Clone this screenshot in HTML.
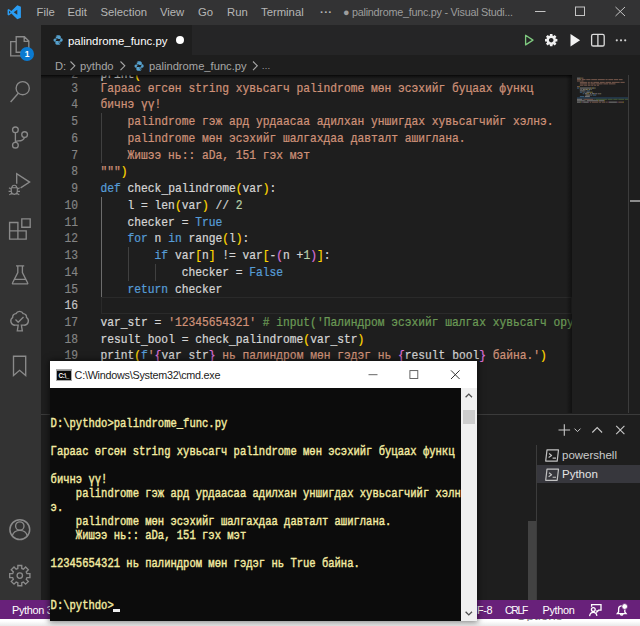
<!DOCTYPE html>
<html lang="mn">
<head>
<meta charset="utf-8">
<title>palindrome_func.py - Visual Studio Code</title>
<style>
*{box-sizing:border-box;margin:0;padding:0}
html,body{width:640px;height:626px;overflow:hidden;background:#fff}
body{position:relative;font-family:"Liberation Sans",sans-serif;font-size:11px;color:#ccc}
.abs{position:absolute}
#vsc{position:absolute;left:0;top:0;width:640px;height:618.5px;background:#1e1e1e;overflow:hidden}
#titlebar{position:absolute;left:0;top:0;width:640px;height:25px;background:#333334}
#titlebar .mi{position:absolute;top:0;height:25px;line-height:24px;font-size:11.3px;color:#b6b6b6;white-space:nowrap}
#title{position:absolute;top:0;left:343px;height:25px;line-height:24px;font-size:10.8px;letter-spacing:-.25px;color:#9d9d9d;white-space:nowrap}
#actbar{position:absolute;left:0;top:25px;width:41px;height:575px;background:#333333}
#actbar svg{position:absolute;overflow:visible}
#tabs{position:absolute;left:41px;top:25px;width:599px;height:30px;background:#252526}
#tab{position:absolute;left:0;top:0;width:151px;height:30px;background:#1e1e1e}
#tab .lbl{position:absolute;left:27px;top:0;height:30px;line-height:32.5px;font-size:11.4px;color:#fff;white-space:nowrap}
#crumbs{position:absolute;left:41px;top:55px;width:599px;height:20px;background:#1e1e1e;color:#a6a6a6;font-size:11.2px}
#crumbs span{position:absolute;top:0;height:20px;line-height:22.2px;white-space:nowrap}
#editor{position:absolute;left:41px;top:75px;width:599px;height:338px;background:#1e1e1e;overflow:hidden}
.ln{transform:scaleY(1.08);transform-origin:0 3.6px;-webkit-text-stroke:.15px currentColor;position:absolute;left:1.1px;width:36px;text-align:right;color:#858585;font-family:"Liberation Mono",monospace;font-size:11.28px;height:16.7px;line-height:16.7px;white-space:pre}
.cl{transform:scaleY(1.08);transform-origin:0 3.6px;-webkit-text-stroke:.22px currentColor;position:absolute;left:59.5px;color:#d4d4d4;font-family:"Liberation Mono",monospace;font-size:11.28px;height:16.7px;line-height:16.7px;white-space:pre}
.cl i{font-style:normal;position:relative;top:1.4px}
.s{color:#ce9178}.k{color:#569cd6}.n{color:#b5cea8}.c{color:#6a9955}.y{color:#ffd700}.p{color:#da70d6}
.guide{position:absolute;width:1px;background:#404040}
#panel{position:absolute;left:41px;top:413.7px;width:599px;height:187px;background:#1e1e1e;border-top:1px solid #3b3b3b}
#status{position:absolute;left:0;top:600px;width:640px;height:18.5px;background:#68217a;color:#fff;font-size:10.9px;letter-spacing:-.3px}
#status span{position:absolute;top:0;height:19px;line-height:21px;white-space:nowrap}
#cmd{position:absolute;left:50px;top:361.2px;width:427px;height:260.3px;background:#0c0c0c;box-shadow:0 0 6px 1px rgba(0,0,0,.55)}
#cmdtitle{position:absolute;left:0;top:0;width:427px;height:26.6px;background:#fff}
#cmdtitle .t{position:absolute;left:24.6px;top:0;height:26px;line-height:28.6px;font-size:10.8px;letter-spacing:-.25px;color:#1c1c1c;white-space:nowrap}
#cmdsb{position:absolute;left:411px;top:26.6px;width:15.5px;height:233.7px;background:#f0f0f0}
.tl{position:absolute;left:.6px;color:#f2eaa1;font-family:"Liberation Mono",monospace;font-size:10.52px;-webkit-text-stroke:.36px currentColor;transform:scaleY(1.19);transform-origin:0 8px;height:14px;line-height:14px;white-space:pre}
</style>
</head>
<body>
<div id="opt" class="abs" style="left:516px;top:608px;font-size:13.5px;color:#7c7c7c;line-height:16px;white-space:nowrap">Options</div>
<div class="abs" style="left:0;top:621px;width:640px;height:5px;background:linear-gradient(#fff,#e9e9e9)"></div>
<div id="vsc">
  <div id="titlebar">
    <svg class="abs" style="left:7px;top:5px" width="14.5" height="14.5" viewBox="0 0 100 100"><path fill="#2a9df4" d="M71 2 30 42 12 28 4 32v36l8 4 18-14 41 40 25-10V12zM14 60V40l11 10zm57 8L46 50l25-18z"/></svg>
    <span class="mi" style="left:36.5px">File</span>
    <span class="mi" style="left:67.5px">Edit</span>
    <span class="mi" style="left:100.5px">Selection</span>
    <span class="mi" style="left:160px">View</span>
    <span class="mi" style="left:198px">Go</span>
    <span class="mi" style="left:227px">Run</span>
    <span class="mi" style="left:261px">Terminal</span>
    <span class="mi" style="left:320px;letter-spacing:1px;top:-3px;font-weight:bold">...</span>
    <div id="title">● palindrome_func.py - Visual Studi...</div>
    <svg class="abs" style="left:530px;top:0" width="110" height="25" viewBox="0 0 110 25" fill="none" stroke="#c4c4c4" stroke-width="1"><path d="M5 11.5h10.5"/><rect x="45.5" y="7" width="9" height="8.5"/><path d="M85.5 7l9.5 9M95 7l-9.500 9"/></svg>
  </div>
  <div id="actbar">
    <svg style="left:0;top:-25px" width="41" height="626" viewBox="0 0 41 626" fill="none" stroke="#8a8a8a" stroke-width="1.35" stroke-linejoin="miter">
      <!-- explorer -->
      <path d="M16.2 36.7h8.2l4.4 4.4v11.1H16.2zM24.2 36.9v4.4h4.4M16 41.6h-5.3v14.2h11.6v-3.4"/>
      <!-- search -->
      <circle cx="22.7" cy="88.2" r="6.6"/><path d="M18.3 93.3 10.6 102"/>
      <!-- source control -->
      <circle cx="15.4" cy="129.8" r="2.85"/><circle cx="24.6" cy="134.6" r="2.85"/><circle cx="15.4" cy="145.2" r="2.85"/>
      <path d="M15.4 132.5v10M24.4 137.3c-.6 3-3 3.600-6 3.600-1.600 0-3 .6-3 1.600"/>
      <!-- run and debug -->
      <path d="M16.700 183.800v-10l12.900 8.300-9 5.800"/>
      <path d="M11.300 187.700h6v3.600a3 3 0 0 1-6 0zM12 187.500a2.300 2.300 0 0 1 4.600 0M11.300 189.400l-2.300-1.600M17.300 189.400l2.300-1.600M11.300 191.300h-2.700M17.300 191.300h2.700M11.700 193.200l-2.400 1.700M16.900 193.200l2.400 1.700" stroke-width="1.150"/>
      <!-- extensions -->
      <path d="M9.600 222.500h8.300v8.300H9.600zM9.600 230.800h8.300v8.300H9.600zM17.900 230.800h8.300v8.300h-8.300zM21.800 218.900h8.400v8.400h-8.400z"/>
      <!-- testing flask -->
      <path d="M16 265.800h8.200M17.800 266v6.600l-5.300 10.400a.6.6 0 0 0 .5.900h14.200a.6.6 0 0 0 .5-.9l-5.300-10.400v-6.600M14.300 279.300h11.600"/>
      <!-- tree / test -->
      <path d="M17.300 330.800h5l-.9-5.600h2.700a4.200 4.200 0 0 0 2.400-7.700 3.400 3.400 0 0 0-3.300-3.900 4 4 0 0 0-7.200 0 3.400 3.400 0 0 0-3.300 3.900 4.200 4.200 0 0 0 2.400 7.700h3.100z"/>
      <path d="M15.500 319.500l2.700 2.700 5.300-5.300"/>
      <!-- bookmark -->
      <path d="M13.500 356.200h12.200v19.300l-6.100-5.200-6.100 5.200z"/>
      <!-- account -->
      <circle cx="19.800" cy="529.600" r="9.900" stroke-width="1.500"/><circle cx="19.800" cy="526" r="4.200"/><path d="M12.200 536c1-3.600 4-5.600 7.600-5.600s6.600 2 7.600 5.600"/>
      <!-- gear -->
      <circle cx="19.800" cy="575.600" r="2.700"/>
      <path d="M17.83 568.47 L17.85 565.49 L21.75 565.49 L21.77 568.47 L23.45 569.16 L25.58 567.07 L28.33 569.82 L26.24 571.95 L26.93 573.63 L29.91 573.65 L29.91 577.55 L26.93 577.57 L26.24 579.25 L28.33 581.38 L25.58 584.13 L23.45 582.04 L21.77 582.73 L21.75 585.71 L17.85 585.71 L17.83 582.73 L16.15 582.04 L14.02 584.13 L11.27 581.38 L13.36 579.25 L12.67 577.57 L9.69 577.55 L9.69 573.65 L12.67 573.63 L13.36 571.95 L11.27 569.82 L14.02 567.07 L16.15 569.16Z"/>
    </svg>
    <div class="abs" style="left:20px;top:21.600px;width:14px;height:14px;border-radius:50%;background:#0a7ad1;color:#fff;font-size:8.500px;font-weight:bold;text-align:center;line-height:14px">1</div>

  </div>
  <div id="tabs">
    <div id="tab"><svg class="abs" style="left:11.800px;top:10.200px" width="10.200" height="10.200" viewBox="0.500 0.500 15 15.600" fill="#56a0cc"><path d="M7.900 1C5.300 1 4.500 2 4.500 3.400V5h3.600v.700H3.200C1.800 5.700 1 6.800 1 8.300s.800 2.700 2.100 2.700h1.400V9.200c0-1.300 1.100-2.400 2.400-2.400h3.400c1.100 0 1.900-.900 1.900-2V3.400C12.200 1.900 10.900 1 7.900 1zM6 2.300a.700.700 0 1 1 0 1.400.700.700 0 0 1 0-1.400z"/><path d="M8.100 15.600c2.600 0 3.400-1 3.400-2.400v-1.600H7.900v-.700h4.900c1.400 0 2.200-1.100 2.200-2.600s-.800-2.700-2.100-2.700h-1.400v1.800c0 1.300-1.100 2.400-2.400 2.400H5.700c-1.100 0-1.900.900-1.900 2v1.400c0 1.500 1.300 2.400 4.300 2.400zM10 14.300a.700.700 0 1 1 0-1.400.700.700 0 0 1 0 1.400z"/></svg><span class="lbl">palindrome_func.py</span><div class="abs" style="left:135px;top:11px;width:8px;height:8px;border-radius:50%;background:#fff"></div></div>
  </div>
  <svg class="abs" style="left:500px;top:25px" width="140" height="30" viewBox="500 25 140 30" fill="none" stroke="#d0d0d0" stroke-width="1.200">
    <path d="M525.600 35.300v9.600l7.400-4.800z" stroke="#7fc97f" stroke-width="1.300" stroke-linejoin="round"/>
    <path d="M549.81 35.71 L549.95 34.03 L552.45 34.03 L552.59 35.71 L553.39 36.04 L554.68 34.95 L556.45 36.72 L555.36 38.01 L555.69 38.81 L557.37 38.95 L557.37 41.45 L555.69 41.59 L555.36 42.39 L556.45 43.68 L554.68 45.45 L553.39 44.36 L552.59 44.69 L552.45 46.37 L549.95 46.37 L549.81 44.69 L549.01 44.36 L547.72 45.45 L545.95 43.68 L547.04 42.39 L546.71 41.59 L545.03 41.45 L545.03 38.95 L546.71 38.81 L547.04 38.01 L545.95 36.72 L547.72 34.95 L549.01 36.04Z M551.20 37.90 a2.300 2.300 0 1 0 0.010 0z" fill="#f0f0f0" fill-rule="evenodd" stroke="none"/>
    <path d="M570.500 34v12.400l9.600-6.200z" fill="#f2f2f2" stroke="none"/>
    <rect x="591.600" y="34.400" width="12.600" height="11.600" rx="1.600" stroke-width="1.300" stroke="#dcdcdc"/><path d="M597.900 34.400v11.600" stroke-width="1.300" stroke="#dcdcdc"/>
    <circle cx="616.800" cy="40.300" r="1.100" fill="#d0d0d0" stroke="none"/><circle cx="621" cy="40.300" r="1.100" fill="#d0d0d0" stroke="none"/><circle cx="625.200" cy="40.300" r="1.100" fill="#d0d0d0" stroke="none"/>
  </svg>
  <div id="crumbs">
    <span style="left:14px">D:</span>
    <svg class="abs" style="left:0;top:0" width="260" height="20" viewBox="41 54 260 20" fill="none" stroke="#a6a6a6" stroke-width="1.100"><path d="M70.500 60.500l4.300 4.300-4.300 4.300M120.500 60.500l4.300 4.300-4.300 4.300M253 60.500l4.300 4.300-4.300 4.300"/></svg>
    <svg class="abs" style="left:92.500px;top:5.600px" width="10.200" height="10.200" viewBox="0.500 0.500 15 15.600" fill="#56a0cc"><path d="M7.900 1C5.300 1 4.500 2 4.500 3.400V5h3.600v.700H3.200C1.800 5.700 1 6.800 1 8.300s.800 2.700 2.100 2.700h1.400V9.200c0-1.300 1.100-2.400 2.400-2.400h3.400c1.100 0 1.900-.900 1.900-2V3.400C12.200 1.900 10.900 1 7.900 1zM6 2.300a.700.700 0 1 1 0 1.400.700.700 0 0 1 0-1.400z"/><path d="M8.100 15.600c2.600 0 3.400-1 3.400-2.400v-1.600H7.900v-.700h4.900c1.400 0 2.200-1.100 2.200-2.600s-.800-2.700-2.100-2.700h-1.400v1.800c0 1.300-1.100 2.400-2.400 2.400H5.700c-1.100 0-1.900.900-1.900 2v1.400c0 1.500 1.300 2.400 4.300 2.400zM10 14.300a.700.700 0 1 1 0-1.400.700.700 0 0 1 0 1.400z"/></svg>
    <span style="left:39px">pythdo</span>
    <span style="left:108px">palindrome_func.py</span>
    <span style="left:220.5px;font-size:9px">…</span>
  </div>
  <div id="editor">
    <div id="code" class="abs" style="left:0;top:0;width:531px;height:338px;overflow:hidden">
    <div class="abs" style="left:59.5px;top:222.27px;width:471px;height:16.74px;border:1.7px solid #2a2a2a"></div>
    <div class="guide" style="left:59.5px;top:38.13px;height:50.22px;background:#404040"></div>
    <div class="guide" style="left:59.5px;top:121.83px;height:100.44px;background:#6c6c6c"></div>
    <div class="guide" style="left:86.6px;top:172.05px;height:33.48px;background:#404040"></div>
    <div class="guide" style="left:113.7px;top:188.79px;height:16.74px;background:#404040"></div>
    <div class="ln" style="top:-9.09px">2</div>
    <div class="cl" style="top:-9.09px">print<span class="y">(</span><span class="s">"""</span></div>
    <div class="ln" style="top:4.65px">3</div>
    <div class="cl" style="top:4.65px"><span class="s">Гараас өгсөн string хувьсагч palindrome мөн эсэхийг буцаах функц</span></div>
    <div class="ln" style="top:21.39px">4</div>
    <div class="cl" style="top:21.39px"><span class="s">бичнэ үү!</span></div>
    <div class="ln" style="top:38.13px">5</div>
    <div class="cl" style="top:38.13px"><span class="s">    palindrome гэж ард урдаасаа адилхан уншигдах хувьсагчийг хэлнэ.</span></div>
    <div class="ln" style="top:54.87px">6</div>
    <div class="cl" style="top:54.87px"><span class="s">    palindrome мөн эсэхийг шалгахдаа давталт ашиглана.</span></div>
    <div class="ln" style="top:71.61px">7</div>
    <div class="cl" style="top:71.61px"><span class="s">    Жишээ нь:: aDa, 151 гэх мэт</span></div>
    <div class="ln" style="top:88.35px">8</div>
    <div class="cl" style="top:88.35px"><span class="s">"""</span><span class="y">)</span></div>
    <div class="ln" style="top:105.09px">9</div>
    <div class="cl" style="top:105.09px"><span class="k">def</span> check<i>_</i>palindrome<span class="y">(</span>var<span class="y">)</span>:</div>
    <div class="ln" style="top:121.83px">10</div>
    <div class="cl" style="top:121.83px">    l = len<span class="y">(</span>var<span class="y">)</span> // <span class="n">2</span></div>
    <div class="ln" style="top:138.57px">11</div>
    <div class="cl" style="top:138.57px">    checker = <span class="k">True</span></div>
    <div class="ln" style="top:155.31px">12</div>
    <div class="cl" style="top:155.31px">    <span class="k">for</span> n <span class="k">in</span> range<span class="y">(</span>l<span class="y">)</span>:</div>
    <div class="ln" style="top:172.05px">13</div>
    <div class="cl" style="top:172.05px">        <span class="k">if</span> var<span class="y">[</span>n<span class="y">]</span> != var<span class="y">[</span>-<span class="p">(</span>n +<span class="n">1</span><span class="p">)</span><span class="y">]</span>:</div>
    <div class="ln" style="top:188.79px">14</div>
    <div class="cl" style="top:188.79px">            checker = <span class="k">False</span></div>
    <div class="ln" style="top:205.53px">15</div>
    <div class="cl" style="top:205.53px">    <span class="k">return</span> checker</div>
    <div class="ln" style="top:222.27px;color:#c6c6c6">16</div>
    <div class="ln" style="top:239.01px">17</div>
    <div class="cl" style="top:239.01px">var<i>_</i>str = <span class="s">'12345654321'</span> <span class="c"># input('Палиндром эсэхийг шалгах хувьсагч оруулна уу: ')</span></div>
    <div class="ln" style="top:255.75px">18</div>
    <div class="cl" style="top:255.75px">result<i>_</i>bool = check<i>_</i>palindrome<span class="y">(</span>var<i>_</i>str<span class="y">)</span></div>
    <div class="ln" style="top:272.49px">19</div>
    <div class="cl" style="top:272.49px">print<span class="y">(</span><span class="k">f</span><span class="s">'</span><span class="p">{</span>var<i>_</i>str<span class="p">}</span><span class="s"> нь палиндром мөн гэдэг нь </span><span class="p">{</span>result<i>_</i>bool<span class="p">}</span><span class="s"> байна.'</span><span class="y">)</span></div>
    </div>
    <div class="abs" style="left:0;top:0;width:531px;height:4px;background:linear-gradient(#000 0,rgba(0,0,0,.55) 30%,rgba(0,0,0,0) 100%);opacity:.8"></div>
    <div class="abs" style="left:525px;top:0;width:6px;height:338px;background:linear-gradient(90deg,rgba(0,0,0,0),rgba(0,0,0,.45))"></div>
    <div class="abs" style="left:586.9px;top:0;width:1px;height:338px;background:#3c3c3c"></div>
    <div class="abs" style="left:588.5px;top:125px;width:11px;height:2px;background:#8c8c8c"></div>
    <svg class="abs" style="left:0;top:0" width="599" height="40" viewBox="0 0 599 40" opacity="0.45"><rect x="536" y="22.35" width="51" height="1.300" fill="#2f6ea8"/><rect x="536.00" y="2.61" width="3.56" height="1.15" fill="#d4d4d4"/><rect x="539.56" y="2.61" width="0.71" height="1.15" fill="#ffd700"/><rect x="540.27" y="2.61" width="2.14" height="1.15" fill="#ce9178"/><rect x="536.00" y="4.02" width="4.27" height="1.15" fill="#ce9178"/><rect x="540.98" y="4.02" width="3.56" height="1.15" fill="#ce9178"/><rect x="545.26" y="4.02" width="4.27" height="1.15" fill="#ce9178"/><rect x="550.24" y="4.02" width="5.70" height="1.15" fill="#ce9178"/><rect x="556.65" y="4.02" width="7.12" height="1.15" fill="#ce9178"/><rect x="564.48" y="4.02" width="2.14" height="1.15" fill="#ce9178"/><rect x="567.33" y="4.02" width="4.98" height="1.15" fill="#ce9178"/><rect x="573.02" y="4.02" width="4.27" height="1.15" fill="#ce9178"/><rect x="578.01" y="4.02" width="3.56" height="1.15" fill="#ce9178"/><rect x="536.00" y="5.43" width="3.56" height="1.15" fill="#ce9178"/><rect x="540.27" y="5.43" width="2.14" height="1.15" fill="#ce9178"/><rect x="538.85" y="6.84" width="7.12" height="1.15" fill="#ce9178"/><rect x="546.68" y="6.84" width="2.14" height="1.15" fill="#ce9178"/><rect x="549.53" y="6.84" width="2.14" height="1.15" fill="#ce9178"/><rect x="552.38" y="6.84" width="5.70" height="1.15" fill="#ce9178"/><rect x="558.78" y="6.84" width="4.98" height="1.15" fill="#ce9178"/><rect x="564.48" y="6.84" width="5.70" height="1.15" fill="#ce9178"/><rect x="570.89" y="6.84" width="7.83" height="1.15" fill="#ce9178"/><rect x="579.43" y="6.84" width="4.27" height="1.15" fill="#ce9178"/><rect x="538.85" y="8.25" width="7.12" height="1.15" fill="#ce9178"/><rect x="546.68" y="8.25" width="2.14" height="1.15" fill="#ce9178"/><rect x="549.53" y="8.25" width="4.98" height="1.15" fill="#ce9178"/><rect x="555.22" y="8.25" width="6.41" height="1.15" fill="#ce9178"/><rect x="562.34" y="8.25" width="4.98" height="1.15" fill="#ce9178"/><rect x="568.04" y="8.25" width="6.41" height="1.15" fill="#ce9178"/><rect x="538.85" y="9.66" width="3.56" height="1.15" fill="#ce9178"/><rect x="543.12" y="9.66" width="2.85" height="1.15" fill="#ce9178"/><rect x="546.68" y="9.66" width="2.85" height="1.15" fill="#ce9178"/><rect x="550.24" y="9.66" width="2.14" height="1.15" fill="#ce9178"/><rect x="553.09" y="9.66" width="2.14" height="1.15" fill="#ce9178"/><rect x="555.94" y="9.66" width="2.14" height="1.15" fill="#ce9178"/><rect x="536.00" y="11.07" width="2.14" height="1.15" fill="#ce9178"/><rect x="538.14" y="11.07" width="0.71" height="1.15" fill="#ffd700"/><rect x="536.00" y="12.48" width="2.14" height="1.15" fill="#569cd6"/><rect x="538.85" y="12.48" width="11.39" height="1.15" fill="#d4d4d4"/><rect x="550.24" y="12.48" width="0.71" height="1.15" fill="#ffd700"/><rect x="550.95" y="12.48" width="2.14" height="1.15" fill="#d4d4d4"/><rect x="553.09" y="12.48" width="0.71" height="1.15" fill="#ffd700"/><rect x="553.80" y="12.48" width="0.71" height="1.15" fill="#d4d4d4"/><rect x="538.85" y="13.89" width="0.71" height="1.15" fill="#d4d4d4"/><rect x="540.27" y="13.89" width="0.71" height="1.15" fill="#d4d4d4"/><rect x="541.70" y="13.89" width="2.14" height="1.15" fill="#d4d4d4"/><rect x="543.83" y="13.89" width="0.71" height="1.15" fill="#ffd700"/><rect x="544.54" y="13.89" width="2.14" height="1.15" fill="#d4d4d4"/><rect x="546.68" y="13.89" width="0.71" height="1.15" fill="#ffd700"/><rect x="548.10" y="13.89" width="1.42" height="1.15" fill="#d4d4d4"/><rect x="550.24" y="13.89" width="0.71" height="1.15" fill="#b5cea8"/><rect x="538.85" y="15.30" width="4.98" height="1.15" fill="#d4d4d4"/><rect x="544.54" y="15.30" width="0.71" height="1.15" fill="#d4d4d4"/><rect x="545.97" y="15.30" width="2.85" height="1.15" fill="#569cd6"/><rect x="538.85" y="16.71" width="2.14" height="1.15" fill="#569cd6"/><rect x="541.70" y="16.71" width="0.71" height="1.15" fill="#d4d4d4"/><rect x="543.12" y="16.71" width="1.42" height="1.15" fill="#569cd6"/><rect x="545.26" y="16.71" width="3.56" height="1.15" fill="#d4d4d4"/><rect x="548.82" y="16.71" width="0.71" height="1.15" fill="#ffd700"/><rect x="549.53" y="16.71" width="0.71" height="1.15" fill="#d4d4d4"/><rect x="550.24" y="16.71" width="0.71" height="1.15" fill="#ffd700"/><rect x="550.95" y="16.71" width="0.71" height="1.15" fill="#d4d4d4"/><rect x="541.70" y="18.12" width="1.42" height="1.15" fill="#569cd6"/><rect x="543.83" y="18.12" width="2.14" height="1.15" fill="#d4d4d4"/><rect x="545.97" y="18.12" width="0.71" height="1.15" fill="#ffd700"/><rect x="546.68" y="18.12" width="0.71" height="1.15" fill="#d4d4d4"/><rect x="547.39" y="18.12" width="0.71" height="1.15" fill="#ffd700"/><rect x="548.82" y="18.12" width="1.42" height="1.15" fill="#d4d4d4"/><rect x="550.95" y="18.12" width="2.14" height="1.15" fill="#d4d4d4"/><rect x="553.09" y="18.12" width="0.71" height="1.15" fill="#ffd700"/><rect x="553.80" y="18.12" width="0.71" height="1.15" fill="#d4d4d4"/><rect x="554.51" y="18.12" width="0.71" height="1.15" fill="#da70d6"/><rect x="555.22" y="18.12" width="0.71" height="1.15" fill="#d4d4d4"/><rect x="556.65" y="18.12" width="0.71" height="1.15" fill="#d4d4d4"/><rect x="557.36" y="18.12" width="0.71" height="1.15" fill="#b5cea8"/><rect x="558.07" y="18.12" width="0.71" height="1.15" fill="#da70d6"/><rect x="558.78" y="18.12" width="0.71" height="1.15" fill="#ffd700"/><rect x="559.50" y="18.12" width="0.71" height="1.15" fill="#d4d4d4"/><rect x="544.54" y="19.53" width="4.98" height="1.15" fill="#d4d4d4"/><rect x="550.24" y="19.53" width="0.71" height="1.15" fill="#d4d4d4"/><rect x="551.66" y="19.53" width="3.56" height="1.15" fill="#569cd6"/><rect x="538.85" y="20.94" width="4.27" height="1.15" fill="#569cd6"/><rect x="543.83" y="20.94" width="4.98" height="1.15" fill="#d4d4d4"/><rect x="536.00" y="23.76" width="4.98" height="1.15" fill="#d4d4d4"/><rect x="541.70" y="23.76" width="0.71" height="1.15" fill="#d4d4d4"/><rect x="543.12" y="23.76" width="9.26" height="1.15" fill="#ce9178"/><rect x="553.09" y="23.76" width="0.71" height="1.15" fill="#6a9955"/><rect x="554.51" y="23.76" width="11.39" height="1.15" fill="#6a9955"/><rect x="566.62" y="23.76" width="4.98" height="1.15" fill="#6a9955"/><rect x="572.31" y="23.76" width="4.27" height="1.15" fill="#6a9955"/><rect x="577.30" y="23.76" width="5.70" height="1.15" fill="#6a9955"/><rect x="583.70" y="23.76" width="3.30" height="1.15" fill="#6a9955"/><rect x="536.00" y="25.17" width="7.83" height="1.15" fill="#d4d4d4"/><rect x="544.54" y="25.17" width="0.71" height="1.15" fill="#d4d4d4"/><rect x="545.97" y="25.17" width="11.39" height="1.15" fill="#d4d4d4"/><rect x="557.36" y="25.17" width="0.71" height="1.15" fill="#ffd700"/><rect x="558.07" y="25.17" width="4.98" height="1.15" fill="#d4d4d4"/><rect x="563.06" y="25.17" width="0.71" height="1.15" fill="#ffd700"/><rect x="536.00" y="26.58" width="3.56" height="1.15" fill="#d4d4d4"/><rect x="539.56" y="26.58" width="0.71" height="1.15" fill="#ffd700"/><rect x="540.27" y="26.58" width="0.71" height="1.15" fill="#569cd6"/><rect x="540.98" y="26.58" width="0.71" height="1.15" fill="#ce9178"/><rect x="541.70" y="26.58" width="0.71" height="1.15" fill="#da70d6"/><rect x="542.41" y="26.58" width="4.98" height="1.15" fill="#d4d4d4"/><rect x="547.39" y="26.58" width="0.71" height="1.15" fill="#da70d6"/><rect x="548.82" y="26.58" width="1.42" height="1.15" fill="#ce9178"/><rect x="550.95" y="26.58" width="6.41" height="1.15" fill="#ce9178"/><rect x="558.07" y="26.58" width="2.14" height="1.15" fill="#ce9178"/><rect x="560.92" y="26.58" width="3.56" height="1.15" fill="#ce9178"/><rect x="565.19" y="26.58" width="1.42" height="1.15" fill="#ce9178"/><rect x="567.33" y="26.58" width="0.71" height="1.15" fill="#da70d6"/><rect x="568.04" y="26.58" width="7.83" height="1.15" fill="#d4d4d4"/><rect x="575.87" y="26.58" width="0.71" height="1.15" fill="#da70d6"/><rect x="577.30" y="26.58" width="4.98" height="1.15" fill="#ce9178"/><rect x="582.28" y="26.58" width="0.71" height="1.15" fill="#ffd700"/></svg>
  </div>
  <div id="panel">
    <div class="abs" style="left:486.500px;top:106px;width:8.300px;height:80px;background:#424242"></div>
    <div class="abs" style="left:494.500px;top:30px;width:1px;height:157px;background:#3c3c3c"></div>
    <div class="abs" style="left:495.500px;top:50px;width:104px;height:18.500px;background:#37373d"></div>
    <div class="abs" style="left:521px;top:31px;height:19px;line-height:18px;font-size:11.500px;color:#cccccc;white-space:nowrap">powershell</div>
    <div class="abs" style="left:521px;top:50px;height:19px;line-height:18px;font-size:11.500px;color:#e4e4e4;white-space:nowrap">Python</div>
    <svg class="abs" style="left:0;top:-1px" width="599" height="187" viewBox="41 413.700 599 187" fill="none" stroke="#c8c8c8" stroke-width="1.100">
      <path d="M564.300 424v11.500M558.500 429.700h11.600"/>
      <path d="M574.500 428.300l3 3 3-3" stroke-width="1"/>
      <path d="M592.300 432.200l4.900-4.900 4.900 4.900"/>
      <path d="M616.200 425.600l8.200 8.200M624.400 425.600l-8.200 8.200"/>
      <g stroke="#c2c2c2" stroke-width="1.200" stroke-linejoin="round">
        <path d="M547 449.600h11.500l-1.300 11.200h-11.500z"/><path d="M549 453.200l2.600 2-3 2M552.600 457.800h3.400" stroke-width="1.100"/>
        <path d="M547 468.800h11.500l-1.300 11.200h-11.500z"/><path d="M549 472.400l2.600 2-3 2M552.600 477h3.400" stroke-width="1.100"/>
      </g>
    </svg>

  </div>
  <div id="status">
    <span style="left:12px">Python 3.9.1</span>
    <span style="left:463px">UTF-8</span>
    <span style="left:505px;font-size:10.400px;letter-spacing:-1.300px">CRLF</span>
    <span style="left:542.500px">Python</span>
    <svg class="abs" style="left:580px;top:0" width="60" height="19" viewBox="580 600 60 19" fill="none" stroke="#fff" stroke-width="1.300">
      <circle cx="593.300" cy="609.600" r="1.900"/><path d="M589.600 616.200c.3-2.500 1.700-3.900 3.700-3.900s3.300 1.400 3.600 3.500M591.600 606.800v-2.200h9.400v5.600h-2.400l-1.700 1.700v-1.700"/>
      <path d="M617.300 613.700h8.800l-1.300-1.700v-3a3.100 3.100 0 0 0-6.200 0v3zM620.400 614.200a1.400 1.400 0 0 0 2.600 0"/>
      <circle cx="624.700" cy="606.500" r="2.900" fill="#fff" stroke="#68217a" stroke-width=".8"/>
    </svg>
  </div>
</div>
<div id="cmd">
  <div id="cmdtitle"><span class="t">C:\Windows\System32\cmd.exe</span>
    <div class="abs" style="left:7.300px;top:8.500px;width:13.400px;height:10.800px;background:#0a0a0a;border-top:1.800px solid #8e8e8e;outline:.4px solid #aaa;overflow:hidden"><span class="abs" style="left:1.200px;top:1.400px;font-size:6.300px;line-height:7px;font-weight:bold;color:#fff;letter-spacing:-.35px;white-space:nowrap">C:\_</span></div>
    <svg class="abs" style="left:300px;top:0" width="127" height="26" viewBox="350 360.600 127 26" fill="none" stroke="#333" stroke-width="1"><path d="M368.500 374.300h9" stroke="#666"/><rect x="409.900" y="370.200" width="7.900" height="7.900" stroke="#555" stroke-width=".9"/><path d="M451 370l8.600 8.600M459.600 370l-8.600 8.600" stroke="#333"/></svg>
  </div>
  <div id="cmdsb">
    <div class="abs" style="left:1.700px;top:22.300px;width:12.500px;height:13.800px;background:#cdcdcd"></div>
    <svg class="abs" style="left:0;top:0" width="15.500" height="234" viewBox="0 0 15.500 234" fill="none" stroke="#505050" stroke-width="1.300"><path d="M4.600 9.300l3.200-3.200 3.200 3.200M4.600 223.700l3.200 3.200 3.200-3.200"/></svg>
  </div>
  <div class="tl" style="top:55.8px">D:\pythdo&gt;palindrome_func.py</div>
  <div class="tl" style="top:83.8px">Гараас өгсөн string хувьсагч palindrome мөн эсэхийг буцаах функц</div>
  <div class="tl" style="top:111.8px">бичнэ үү!</div>
  <div class="tl" style="top:125.8px">    palindrome гэж ард урдаасаа адилхан уншигдах хувьсагчийг хэлн</div>
  <div class="tl" style="top:139.8px">э.</div>
  <div class="tl" style="top:153.8px">    palindrome мөн эсэхийг шалгахдаа давталт ашиглана.</div>
  <div class="tl" style="top:167.8px">    Жишээ нь:: aDa, 151 гэх мэт</div>
  <div class="tl" style="top:195.8px">12345654321 нь палиндром мөн гэдэг нь True байна.</div>
  <div class="tl" style="top:237.8px">D:\pythdo&gt;</div>
  <div class="abs" style="left:63.400px;top:247.600px;width:6.700px;height:3.500px;background:#eee"></div>
</div>
</body>
</html>
